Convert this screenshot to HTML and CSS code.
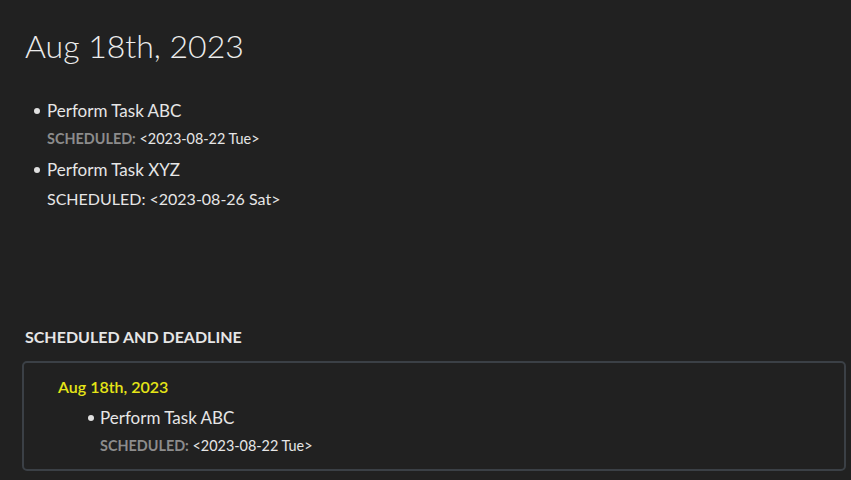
FILE: index.html
```html
<!DOCTYPE html>
<html>
<head>
<meta charset="utf-8">
<link rel="stylesheet" href="styles.css">
</head>
<body>
<div class="page">
  <h1 class="title">Aug 18th, 2023</h1>
  <ul class="blocks">
    <li class="block">
      <div class="task">Perform Task ABC</div>
      <div class="sched"><span class="label">SCHEDULED:</span> &lt;2023-08-22 Tue&gt;</div>
    </li>
    <li class="block">
      <div class="task">Perform Task XYZ</div>
      <div class="sched-plain">SCHEDULED: &lt;2023-08-26 Sat&gt;</div>
    </li>
  </ul>
  <h2 class="section">SCHEDULED AND DEADLINE</h2>
  <div class="panel">
    <div class="panel-date">Aug 18th, 2023</div>
    <ul class="blocks inner">
      <li class="block">
        <div class="task">Perform Task ABC</div>
        <div class="sched"><span class="label">SCHEDULED:</span> &lt;2023-08-22 Tue&gt;</div>
      </li>
    </ul>
  </div>
</div>
</body>
</html>
```
FILE: styles.css
```css
html, body {
  margin: 0;
  padding: 0;
  background: #212121;
  color: #e6e6e6;
  font-family: "Lato", "Noto Sans", sans-serif;
}
.page {
  padding: 26px 5px 0 25px;
}
.title {
  margin: 0;
  font-size: 32px;
  font-weight: 300;
  line-height: 40px;
  color: #ececec;
}
.blocks {
  list-style: none;
  margin: 31px 0 0 0;
  padding: 0 0 0 22px;
}
.block {
  position: relative;
}
.block::before {
  content: "";
  position: absolute;
  left: -13px;
  top: 11px;
  width: 6px;
  height: 6px;
  border-radius: 50%;
  background: #e0e0e0;
}
.task {
  font-size: 17px;
  line-height: 28px;
}
.sched {
  font-size: 14.4px;
  line-height: 28px;
  padding-bottom: 3px;
}
.label {
  color: #8c8c8c;
  font-weight: 700;
}
.sched-plain {
  font-size: 16px;
  line-height: 30px;
}
.section {
  margin: 111px 0 0 0;
  font-size: 16px;
  font-weight: 700;
  line-height: 24px;
  color: #e6e6e6;
}
.panel {
  margin: 12px 0 0 -3px;
  border: 2px solid #3b4046;
  border-radius: 5px;
  padding: 12px 20px 10px 34px;
  height: 84px;
}
.panel-date {
  color: #e5e517;
  font-size: 16px;
  font-weight: 600;
  line-height: 24px;
}
.inner {
  margin-top: 5px;
  padding-left: 42px;
}
.inner .block::before {
  left: -12px;
}
```
